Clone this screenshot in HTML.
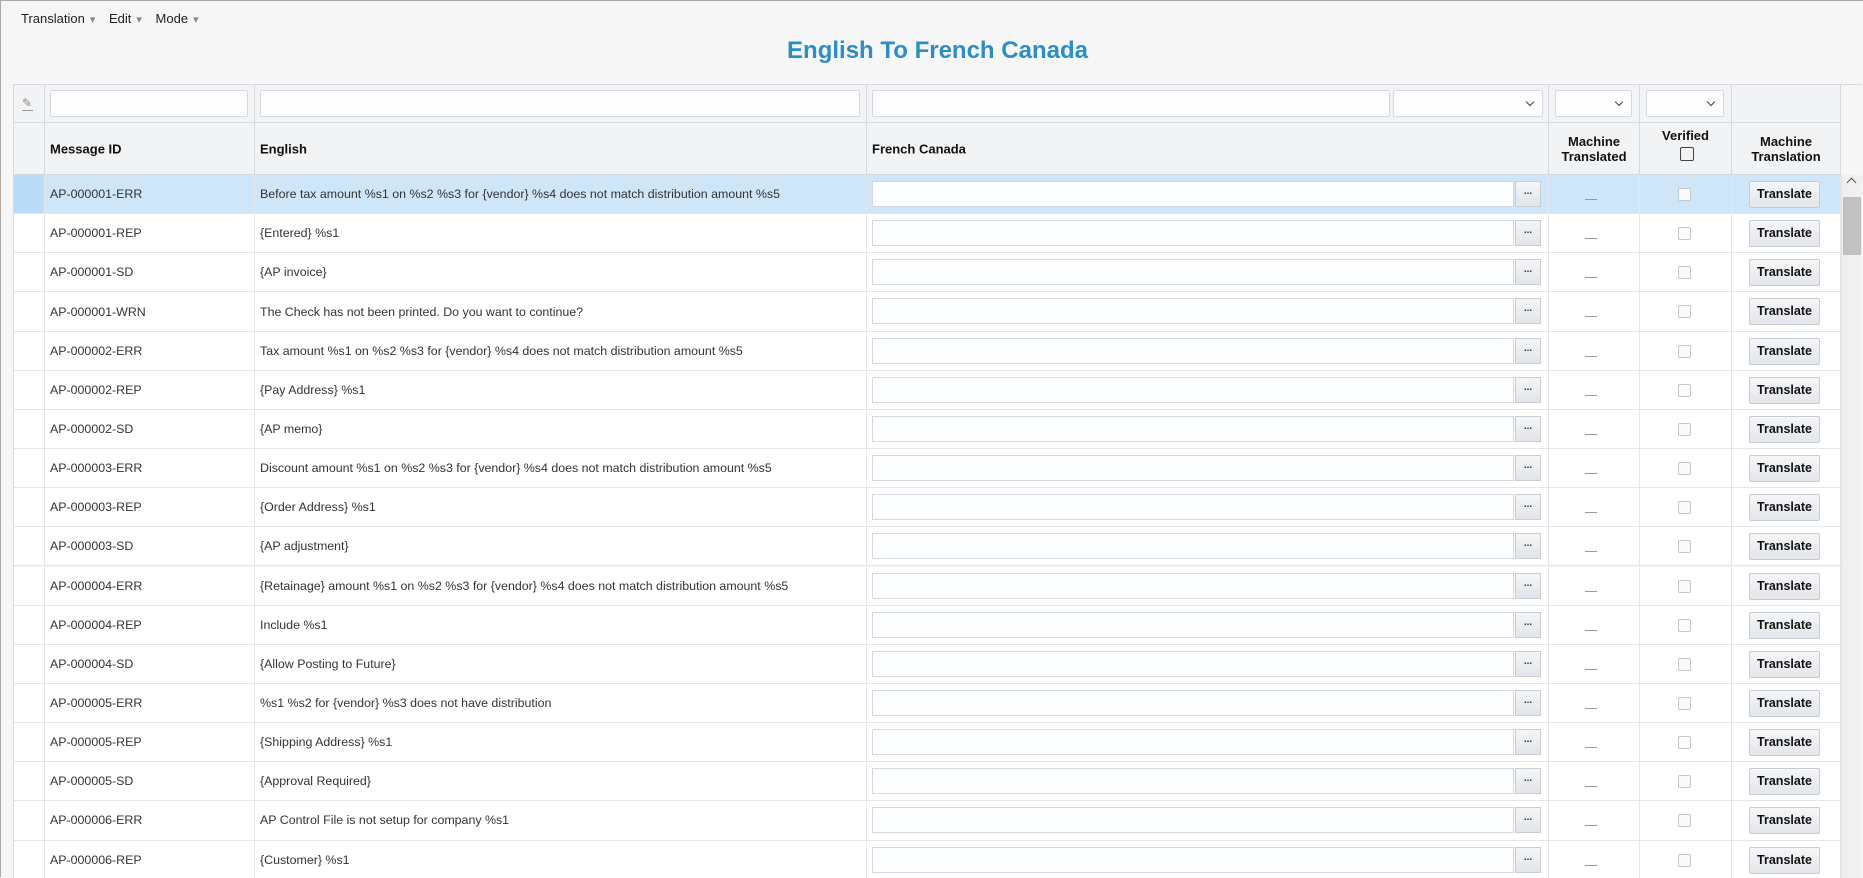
<!DOCTYPE html>
<html><head><meta charset="utf-8"><style>
*{box-sizing:border-box;margin:0;padding:0}
body{width:1863px;height:877px;overflow:hidden;background:#f6f6f6;font-family:"Liberation Sans",Arial,sans-serif;font-size:12.4px;color:#333;position:relative;border:1px solid #aaa;border-right:none;border-bottom:none}
.menu{position:absolute;left:20px;top:10px;font-size:13px;color:#222}
.menu span{margin-right:10px}
.menu i{font-style:normal;color:#888;font-size:11px;margin-left:5px}
.title{position:absolute;left:0;width:1873px;top:36px;text-align:center;font-size:24px;font-weight:bold;color:#2a8fc4}
.tbl{position:absolute;left:12px;top:83px;width:1849px;height:794px;border-left:1px solid #d6dadf;border-top:1px solid #d6dadf;overflow:hidden}
.row{position:absolute;left:0;width:1827px;border-bottom:1px solid #e4e6e9;background:#fff}
.c{position:absolute;top:0;bottom:0;border-right:1px solid #e4e6e9}
.filter{top:0;height:38px;background:#f2f3f5;border-bottom:1px solid #d6dadf}
.filter .c{border-color:#d6dadf}
.hdr{top:38px;height:52px;background:#f2f3f5;border-bottom:1px solid #d6dadf}
.hdr .c{border-color:#d6dadf;font-weight:bold;color:#111;font-size:13px}
.fi{position:absolute;height:27px;top:5px;background:#fdfdfe;border:1px solid #d7dbe0;border-radius:2px}
.sel::after{content:"";position:absolute;right:9px;top:8px;width:5px;height:5px;border-right:1.5px solid #444;border-bottom:1.5px solid #444;transform:rotate(45deg)}
.txt{position:absolute;left:5px;top:50%;transform:translateY(-50%);white-space:nowrap}
.ctr{text-align:center;left:0;right:0}
.fr{position:absolute;left:5px;top:6px;width:642px;height:26px;background:#fdfeff;border:1px solid #d4d9df}
.dots{position:absolute;left:648px;top:6px;width:26px;height:26px;background:linear-gradient(#f4f5f7,#e2e5e9);border:1px solid #c9ced4;font-size:10px;text-align:center;line-height:20px;font-weight:bold;color:#333}
.dash{position:absolute;left:36px;top:24px;width:12px;border-top:1px solid #999}
.cb{position:absolute;left:38px;top:13px;width:13px;height:13px;border:1px solid #c4c8cd;border-radius:2px;background:#fafafa}
.btn{position:absolute;left:17px;top:6px;width:71px;height:27px;background:linear-gradient(#f5f6f8,#e3e6ea);border:1px solid #c6ccd3;border-radius:2px;font-weight:bold;font-size:12.5px;color:#111;text-align:center;line-height:25px}
.sb{position:absolute;left:1827px;top:90px;right:0;bottom:0;background:#f0f0f0;border-left:1px solid #e2e2e2}
</style></head><body>
<div class="menu"><span>Translation<i>▾</i></span> <span>Edit<i>▾</i></span> <span>Mode<i>▾</i></span></div>
<div class="title">English To French Canada</div>
<div class="tbl">
<div class="row filter">
 <div class="c" style="left:0;width:31px"><span style="position:absolute;left:8px;top:11px;color:#888;font-size:12px">✎</span><div style="position:absolute;left:8px;top:25px;width:11px;border-top:1px solid #999"></div></div>
 <div class="c" style="left:31px;width:210px"><div class="fi" style="left:5px;width:198px"></div></div>
 <div class="c" style="left:241px;width:612px"><div class="fi" style="left:5px;width:600px"></div></div>
 <div class="c" style="left:853px;width:682px"><div class="fi" style="left:5px;width:518px"></div><div class="fi sel" style="left:526px;width:150px"></div></div>
 <div class="c" style="left:1535px;width:91px"><div class="fi sel" style="left:6px;width:77px"></div></div>
 <div class="c" style="left:1626px;width:92px"><div class="fi sel" style="left:6px;width:78px"></div></div>
 <div class="c" style="left:1718px;width:109px"></div>
</div>
<div class="row hdr">
 <div class="c" style="left:0;width:31px"></div>
 <div class="c" style="left:31px;width:210px"><span class="txt">Message ID</span></div>
 <div class="c" style="left:241px;width:612px"><span class="txt">English</span></div>
 <div class="c" style="left:853px;width:682px"><span class="txt">French Canada</span></div>
 <div class="c" style="left:1535px;width:91px"><span class="txt ctr">Machine<br>Translated</span></div>
 <div class="c" style="left:1626px;width:92px"><span style="position:absolute;left:0;right:0;top:5px;text-align:center">Verified</span><div style="position:absolute;left:40px;top:24px;width:14px;height:14px;border:1.5px solid #444;border-radius:2px"></div></div>
 <div class="c" style="left:1718px;width:109px"><span class="txt ctr">Machine<br>Translation</span></div>
</div>
<div id="rows"></div>
<div class="sb"><div style="position:absolute;top:4px;left:6px;width:7px;height:7px;border-left:1.5px solid #555;border-top:1.5px solid #555;transform:rotate(45deg)"></div><div style="position:absolute;top:22px;left:1px;right:1px;height:58px;background:#c1c1c1"></div></div>
</div>
<script>
var d=[["AP-000001-ERR","Before tax amount %s1 on %s2 %s3 for {vendor} %s4 does not match distribution amount %s5"],["AP-000001-REP","{Entered} %s1"],["AP-000001-SD","{AP invoice}"],["AP-000001-WRN","The Check has not been printed. Do you want to continue?"],["AP-000002-ERR","Tax amount %s1 on %s2 %s3 for {vendor} %s4 does not match distribution amount %s5"],["AP-000002-REP","{Pay Address} %s1"],["AP-000002-SD","{AP memo}"],["AP-000003-ERR","Discount amount %s1 on %s2 %s3 for {vendor} %s4 does not match distribution amount %s5"],["AP-000003-REP","{Order Address} %s1"],["AP-000003-SD","{AP adjustment}"],["AP-000004-ERR","{Retainage} amount %s1 on %s2 %s3 for {vendor} %s4 does not match distribution amount %s5"],["AP-000004-REP","Include %s1"],["AP-000004-SD","{Allow Posting to Future}"],["AP-000005-ERR","%s1 %s2 for {vendor} %s3 does not have distribution"],["AP-000005-REP","{Shipping Address} %s1"],["AP-000005-SD","{Approval Required}"],["AP-000006-ERR","AP Control File is not setup for company %s1"],["AP-000006-REP","{Customer} %s1"]];
var h="";d.forEach(function(r,i){var t=90+i*39.15;var bg=i==0?"#cfe5f8":"#fff";
h+='<div class="row" style="top:'+t+'px;height:39.15px;background:'+bg+'">'+
'<div class="c" style="left:0;width:31px;'+(i==0?'background:#b9dcf7':'')+'"></div>'+
'<div class="c" style="left:31px;width:210px"><span class="txt">'+r[0]+'</span></div>'+
'<div class="c" style="left:241px;width:612px"><span class="txt">'+r[1]+'</span></div>'+
'<div class="c" style="left:853px;width:682px"><div class="fr"></div><div class="dots">...</div></div>'+
'<div class="c" style="left:1535px;width:91px"><div class="dash"></div></div>'+
'<div class="c" style="left:1626px;width:92px"><div class="cb"></div></div>'+
'<div class="c" style="left:1718px;width:109px"><div class="btn">Translate</div></div></div>';});
document.getElementById("rows").innerHTML=h;
</script>
</body></html>
